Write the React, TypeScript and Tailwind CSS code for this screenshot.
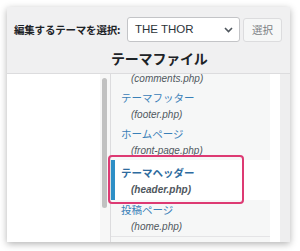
import React from 'react';

const files = [
  { name: 'テーマフッター', file: '(footer.php)' },
  { name: 'ホームページ', file: '(front-page.php)' },
  { name: 'テーマヘッダー', file: '(header.php)', active: true },
  { name: '投稿ページ', file: '(home.php)' },
];

const jp = { fontFamily: '"Noto Sans CJK JP", "Liberation Sans", sans-serif' };
const latin = { fontFamily: '"Liberation Sans", "Noto Sans CJK JP", sans-serif' };

const App = () => {
  return (
    <div className="w-[300px] h-[251px] bg-white pt-[7px] pl-[7px] overflow-hidden" style={jp}>
      <div className="w-[283px] h-[235px] bg-[#f0f0f1] shadow-[0_2px_7px_rgba(0,0,0,0.3)] flex flex-col overflow-hidden">
        {/* theme select row */}
        <div className="flex items-center h-[25px] mt-[10px] pl-[7px]">
          <div className="w-[113px] text-[10.5px] font-bold text-[#1d2327] tracking-[-0.2px] whitespace-nowrap">
            編集するテーマを選択:
          </div>
          <div className="w-[113px] h-[25px] bg-white border border-[#c3c4c7] rounded-[3px] flex items-center pl-[7px] pr-[5px]">
            <span className="text-[11.5px] text-[#2c3338] flex-1" style={latin}>THE THOR</span>
            <svg width="9" height="6" viewBox="0 0 9 6" className="mr-[1px]">
              <path d="M1 1l3.5 3.5L8 1" fill="none" stroke="#50575e" strokeWidth="1.6" />
            </svg>
          </div>
          <div className="ml-[3px] w-[39px] h-[24px] bg-[#f6f7f7] border border-[#dcdcde] rounded-[3px] flex items-center justify-center text-[10.5px] text-[#7c7f84]">
            選択
          </div>
        </div>

        {/* heading */}
        <div className="h-[31px] flex items-center pl-[104px]">
          <h2 className="text-[14px] font-bold text-[#1d2327] leading-none tracking-[-0.2px]">テーマファイル</h2>
        </div>

        <div className="flex flex-1 min-h-0 border-t border-[#dcdcde]">
          {/* editor pane */}
          <div className="w-[93px] bg-white" />
          {/* editor scrollbar */}
          <div className="w-[10px] bg-[#f7f7f7] pt-[4px] pl-[2px]">
            <div className="w-[5px] h-[130px] bg-[#c1c1c1] rounded-full" />
          </div>
          {/* file list */}
          <div className="w-[160px] bg-[#f6f7f7] border-l border-[#dcdcde]">
            <div className="-mt-[4px] pl-[20px] h-[17px] leading-[17px] text-[10px] italic text-[#50575e]" style={latin}>
              (comments.php)
            </div>
            <div className="h-[1px]" />
            {files.map((f) =>
              f.active ? (
                <div key={f.file} className="relative bg-white border-l-[4px] border-[#2d8fc6] pt-[4px] pb-[2px]">
                  <div className="pl-[6px] h-[17px] leading-[17px] text-[10.5px] font-bold text-[#2e6b9e]">{f.name}</div>
                  <div className="pl-[16px] h-[17px] leading-[17px] text-[10px] italic font-bold text-[#50575e]" style={latin}>
                    {f.file}
                  </div>
                  <div className="absolute -left-[7px] -top-[5px] right-[26px] -bottom-[4px] border-2 border-[#dd3a73] rounded-[4px]" />
                </div>
              ) : (
                <div key={f.file} className="py-[1px]">
                  <div className="pl-[10px] h-[17px] leading-[17px] text-[10.5px] text-[#3a80b8]">{f.name}</div>
                  <div className="pl-[20px] h-[17px] leading-[17px] text-[10px] italic text-[#50575e]" style={latin}>
                    {f.file}
                  </div>
                </div>
              )
            )}
            <div className="border-t border-[#e4e4e6]" />
          </div>
          {/* list scrollbar track */}
          <div className="w-[10px] bg-white" />
          <div className="flex-1 bg-[#eeeeef]" />
        </div>
      </div>
    </div>
  );
};

export default App;
